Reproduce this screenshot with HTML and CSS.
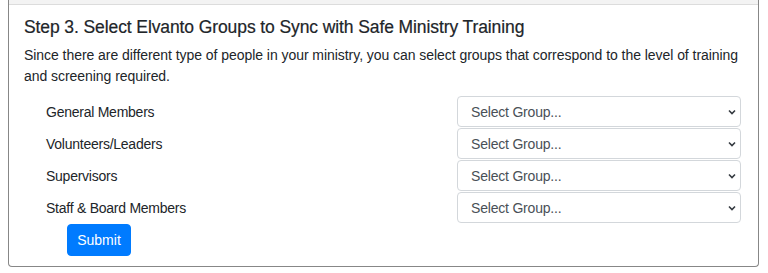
FILE: index.html
```html
<!DOCTYPE html>
<html lang="en">
<head>
  <meta charset="UTF-8">
  <meta name="viewport" content="width=device-width, initial-scale=1.0">
  <title>Elvanto Group Sync</title>
  <link rel="stylesheet" href="styles.css">
</head>
<body>
  <div class="card">
    <div class="card-top"></div>
    <div class="card-body">
      <h5 class="step-title">Step 3. Select Elvanto Groups to Sync with Safe Ministry Training</h5>
      <p class="step-text">Since there are different type of people in your ministry, you can select groups that correspond to the level of training and screening required.</p>
      <form class="group-form" onsubmit="return false">
        <div class="group-row">
          <label for="general">General Members</label>
          <select id="general" class="group-select">
            <option>Select Group...</option>
          </select>
        </div>
        <div class="group-row">
          <label for="volunteers">Volunteers/Leaders</label>
          <select id="volunteers" class="group-select">
            <option>Select Group...</option>
          </select>
        </div>
        <div class="group-row">
          <label for="supervisors">Supervisors</label>
          <select id="supervisors" class="group-select">
            <option>Select Group...</option>
          </select>
        </div>
        <div class="group-row">
          <label for="staff">Staff &amp; Board Members</label>
          <select id="staff" class="group-select">
            <option>Select Group...</option>
          </select>
        </div>
        <button type="submit" class="submit-btn">Submit</button>
      </form>
    </div>
  </div>
</body>
</html>
```

FILE: styles.css
```css
body {
  margin: 0;
  font-family: 'Liberation Sans', Arial, sans-serif;
  font-size: 14px;
  line-height: 1.5;
  color: #212529;
  background-color: #fff;
}
.card {
  margin: 0 9px 0 8px;
  border: 1px solid #878787;
  border-top: none;
  border-radius: 0 0 4px 4px;
}
.card-top {
  height: 4px;
  background-color: #f3f3f3;
  border-bottom: 1px solid #dcdcdc;
}
.card-body {
  padding: 12px 16px 10px 15px;
}
.step-title {
  margin: 0 0 7px;
  font-size: 17.5px;
  font-weight: normal;
  line-height: 21px;
  letter-spacing: -0.1px;
  -webkit-text-stroke: 0.2px #212529;
}
.step-text {
  margin: 0 0 9px;
  line-height: 21px;
  letter-spacing: -0.05px;
}
.group-row {
  display: flex;
  align-items: center;
  justify-content: space-between;
  padding-left: 22px;
  padding-right: 1px;
  margin-bottom: 1px;
}
.group-row label {
  padding-top: 2px;
  letter-spacing: -0.25px;
}
.group-select {
  width: 284px;
  height: 31px;
  padding: 0 28px 0 13px;
  font-family: inherit;
  font-size: 14px;
  letter-spacing: -0.2px;
  color: #495057;
  background-color: #fff;
  background-image: url("data:image/svg+xml,%3Csvg xmlns='http://www.w3.org/2000/svg' width='8' height='6' viewBox='0 0 8 6'%3E%3Cpath d='M1 1.5l3 3 3-3' fill='none' stroke='%23343a40' stroke-width='1.6'/%3E%3C/svg%3E");
  background-repeat: no-repeat;
  background-position: right 4px center;
  border: 1px solid #d3d7db;
  border-radius: 4px;
  appearance: none;
  -webkit-appearance: none;
}
.submit-btn {
  margin: 0 0 0 43px;
  width: 64px;
  height: 32px;
  padding: 0;
  font-family: inherit;
  font-size: 14px;
  color: #fff;
  background-color: #007bff;
  border: 1px solid #007bff;
  border-radius: 4px;
  cursor: pointer;
}
```
